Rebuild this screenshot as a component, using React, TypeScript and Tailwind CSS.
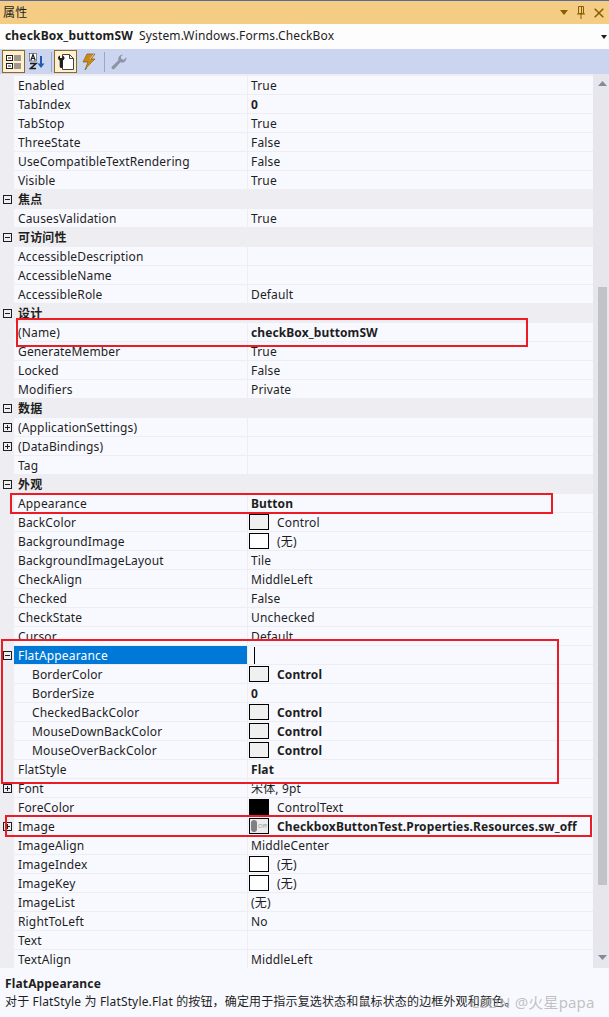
import React from 'react';

type Row = {
  name: string;
  value?: string;
  bold?: boolean;
  cat?: boolean;
  box?: 'plus' | 'minus';
  indent?: boolean;
  swatch?: 'control' | 'white' | 'black' | 'image';
  selected?: boolean;
};

const rows: Row[] = [
  { name: 'Enabled', value: 'True' },
  { name: 'TabIndex', value: '0', bold: true },
  { name: 'TabStop', value: 'True' },
  { name: 'ThreeState', value: 'False' },
  { name: 'UseCompatibleTextRendering', value: 'False' },
  { name: 'Visible', value: 'True' },
  { name: '焦点', cat: true, box: 'minus' },
  { name: 'CausesValidation', value: 'True' },
  { name: '可访问性', cat: true, box: 'minus' },
  { name: 'AccessibleDescription' },
  { name: 'AccessibleName' },
  { name: 'AccessibleRole', value: 'Default' },
  { name: '设计', cat: true, box: 'minus' },
  { name: '(Name)', value: 'checkBox_buttomSW', bold: true },
  { name: 'GenerateMember', value: 'True' },
  { name: 'Locked', value: 'False' },
  { name: 'Modifiers', value: 'Private' },
  { name: '数据', cat: true, box: 'minus' },
  { name: '(ApplicationSettings)', box: 'plus' },
  { name: '(DataBindings)', box: 'plus' },
  { name: 'Tag' },
  { name: '外观', cat: true, box: 'minus' },
  { name: 'Appearance', value: 'Button', bold: true },
  { name: 'BackColor', value: 'Control', swatch: 'control' },
  { name: 'BackgroundImage', value: '(无)', swatch: 'white' },
  { name: 'BackgroundImageLayout', value: 'Tile' },
  { name: 'CheckAlign', value: 'MiddleLeft' },
  { name: 'Checked', value: 'False' },
  { name: 'CheckState', value: 'Unchecked' },
  { name: 'Cursor', value: 'Default' },
  { name: 'FlatAppearance', box: 'minus', selected: true },
  { name: 'BorderColor', value: 'Control', bold: true, swatch: 'control', indent: true },
  { name: 'BorderSize', value: '0', bold: true, indent: true },
  { name: 'CheckedBackColor', value: 'Control', bold: true, swatch: 'control', indent: true },
  { name: 'MouseDownBackColor', value: 'Control', bold: true, swatch: 'control', indent: true },
  { name: 'MouseOverBackColor', value: 'Control', bold: true, swatch: 'control', indent: true },
  { name: 'FlatStyle', value: 'Flat', bold: true },
  { name: 'Font', value: '宋体, 9pt', box: 'plus' },
  { name: 'ForeColor', value: 'ControlText', swatch: 'black' },
  { name: 'Image', value: 'CheckboxButtonTest.Properties.Resources.sw_off', bold: true, swatch: 'image', box: 'plus' },
  { name: 'ImageAlign', value: 'MiddleCenter' },
  { name: 'ImageIndex', value: '(无)', swatch: 'white' },
  { name: 'ImageKey', value: '(无)', swatch: 'white' },
  { name: 'ImageList', value: '(无)' },
  { name: 'RightToLeft', value: 'No' },
  { name: 'Text' },
  { name: 'TextAlign', value: 'MiddleLeft' },
];

function ExpandBox({ type }: { type: 'plus' | 'minus' }) {
  return (
    <svg width="9" height="9" viewBox="0 0 9 9" className="absolute left-[3px] top-[5px]">
      <rect x="0.5" y="0.5" width="8" height="8" fill="none" stroke="#1e1e1e" />
      <path d="M2 4.5h5" stroke="#1e1e1e" />
      {type === 'plus' && <path d="M4.5 2v5" stroke="#1e1e1e" />}
    </svg>
  );
}

function Swatch({ kind }: { kind: NonNullable<Row['swatch']> }) {
  if (kind === 'image') {
    return (
      <div className="w-5 h-4 border border-black bg-[#ececec] flex items-center shrink-0 overflow-hidden">
        <div className="ml-[1px] w-[6px] h-3 rounded-full bg-[#808080]" />
        <span className="ml-[1px] text-[6px] leading-none tracking-normal font-normal text-[#999999]">Off</span>
      </div>
    );
  }
  const bg = kind === 'control' ? 'bg-[#f0f0f0]' : kind === 'black' ? 'bg-black' : 'bg-white';
  return <div className={`w-5 h-4 border border-black shrink-0 ${bg}`} />;
}

function PropRow({ row }: { row: Row }) {
  if (row.cat) {
    return (
      <div className="relative h-[19px] shrink-0 bg-[#eeeef2] pl-[18px] leading-[20px] font-bold text-[#1e1e1e]">
        {row.box && <ExpandBox type={row.box} />}
        {row.name}
      </div>
    );
  }
  return (
    <div className="relative h-[19px] shrink-0 flex bg-[#eeeef2]">
      {row.box && <ExpandBox type={row.box} />}
      <div
        className={`ml-[14px] w-[233px] h-[18px] leading-[20px] shrink-0 ${row.indent ? 'pl-[18px]' : 'pl-1'} ${
          row.selected ? 'bg-[#0078d7] text-white' : 'bg-[#f8f9ff] text-[#1e1e1e]'
        }`}
      >
        {row.name}
      </div>
      <div className={`ml-[1px] flex-1 h-[18px] flex items-center whitespace-nowrap text-[#1e1e1e] bg-[#f8f9ff] ${row.swatch ? 'pl-[1px]' : 'pl-[3px]'} ${row.bold ? 'font-bold tracking-[0.1px]' : ''}`}>
        {row.swatch && <Swatch kind={row.swatch} />}
        {row.swatch && <span className="w-[8px] shrink-0" />}
        {row.value && <span className="leading-[18px] pt-[2px]">{row.value}</span>}
        {row.selected && <span className="ml-[3px] w-[1px] h-[17px] bg-black" />}
      </div>
    </div>
  );
}

function CategorizedIcon() {
  return (
    <svg width="16" height="16" viewBox="0 0 16 16">
      <rect x="0.5" y="1.5" width="6" height="5" fill="#fff" stroke="#1e1e1e" />
      <path d="M2 4h3" stroke="#1e1e1e" />
      <rect x="0.5" y="9.5" width="6" height="5" fill="#fff" stroke="#1e1e1e" />
      <path d="M2 12h3" stroke="#1e1e1e" />
      <path d="M8 2h7M8 4h7M8 6h7M8 10h7M8 12h7M8 14h7" stroke="#424242" />
    </svg>
  );
}

function SortIcon() {
  return (
    <svg width="16" height="17" viewBox="0 0 16 17">
      <rect x="0.5" y="0.5" width="7" height="7.5" fill="#fff" stroke="#424242" strokeWidth="0.6" />
      <path d="M1.8 7.5 4 1.5l2.2 6M2.6 5.5h2.8" fill="none" stroke="#1e1e1e" strokeWidth="1.2" />
      <path d="M1 10.5h6L1.5 15.5H7" fill="none" stroke="#1e1e1e" strokeWidth="1.6" />
      <path d="M12 3v11" stroke="#1c5fb0" strokeWidth="2" />
      <path d="M8.5 10.5 12 15l3.5-4.5z" fill="#1c5fb0" />
    </svg>
  );
}

function PagesIcon() {
  return (
    <svg width="18" height="18" viewBox="0 0 18 18">
      <path d="M5.500 1.500h7l4 4v11h-11z" fill="#fff" stroke="#424242" />
      <path d="M12.500 1.500v4h4" fill="none" stroke="#424242" />
      <path d="M1 5c0-1.200.8-2.200 2-2.600V5h2.500V2.400C6.700 2.800 7.500 3.800 7.500 5c0 1.200-.7 2.100-1.700 2.500V13.500a1.550 1.550 0 0 1-3.100 0V7.500C1.700 7.100 1 6.200 1 5z" fill="#1e1e1e" />
    </svg>
  );
}

function BoltIcon() {
  return (
    <svg width="16" height="18" viewBox="0 0 16 18">
      <path d="M6 1h8l-4 5h4L4 17l3-8H2z" fill="#c98a1a" stroke="#7a5a1a" strokeWidth="0.7" />
      <path d="M13 1 9 6M14 7 6 15" stroke="#fff" strokeWidth="0.8" opacity="0.7" />
    </svg>
  );
}

function WrenchIcon() {
  return (
    <svg width="16" height="16" viewBox="0 0 16 16">
      <path d="M15.500 4a4.500 4.500 0 0 1-6 4.300L3.500 14.800a1.700 1.700 0 0 1-2.500-2.400l6.400-6.200A4.500 4.500 0 0 1 12 .5L9.800 2.800l.6 2.300 2.400.7 2.300-2.300c.2 0 .4 0 .4.500z" fill="#8f95a6" />
    </svg>
  );
}

export default function App() {
  return (
    <div className="relative w-[609px] h-[1017px] flex flex-col overflow-hidden text-[12px] tracking-[0.15px] bg-[#eeeef2] font-['Noto_Sans','Noto_Sans_CJK_SC',sans-serif]">
      {/* Title */}
      <div className="h-[24px] shrink-0 flex items-center border-t border-[#5a6a9a] bg-[#f5cc84] pl-[3px] pr-[5px] text-[#1e1e1e]">
        <span>属性</span>
        <div className="ml-auto flex items-center gap-[9px]">
          <svg width="8" height="5" viewBox="0 0 8 5"><path d="M0 0h8L4 5z" fill="#8a5c00" /></svg>
          <svg width="8" height="13" viewBox="0 0 8 13"><path d="M1.500.5h5v7h-5zM4.500 1v6M0 8h8M4 8v5" fill="none" stroke="#8a5c00" /></svg>
          <svg width="10" height="10" viewBox="0 0 10 10"><path d="M.7.7l8.600 8.600M9.300.7.7 9.300" stroke="#8a5c00" strokeWidth="1.500" /></svg>
        </div>
      </div>

      {/* Object selector */}
      <div className="h-[25px] shrink-0 flex items-center bg-[#fdfdfd] pl-[5px] pr-[1px] pb-[2px] text-[#1e1e1e] whitespace-nowrap">
        <span className="font-bold tracking-[0.17px]">checkBox_buttomSW</span>
        <span className="ml-[6px]">System.Windows.Forms.CheckBox</span>
        <svg className="ml-auto mr-[1px] mt-[2px]" width="6" height="4" viewBox="0 0 6 4"><path d="M0 0h6L3 4z" fill="#1e1e1e" /></svg>
      </div>

      {/* Toolbar */}
      <div className="h-[25px] shrink-0 flex items-center bg-[#ccd5f0] pl-[2px]">
        <div className="w-[23px] h-[23px] border border-[#8a6a2a] bg-[#fff0d0] flex items-center justify-center">
          <CategorizedIcon />
        </div>
        <div className="ml-[4px] w-[16px] flex items-center justify-center"><SortIcon /></div>
        <div className="ml-[6px] w-[1px] h-[20px] bg-[#9aa6c4]" />
        <div className="ml-[2px] w-[23px] h-[23px] border border-[#8a6a2a] bg-[#fff0d0] flex items-center justify-center">
          <PagesIcon />
        </div>
        <div className="ml-[4px] w-[16px] flex items-center justify-center"><BoltIcon /></div>
        <div className="ml-[7px] w-[1px] h-[20px] bg-[#9aa6c4]" />
        <div className="ml-[6px] w-[16px] flex items-center justify-center"><WrenchIcon /></div>
      </div>

      {/* Grid + scrollbar */}
      <div className="h-[894px] shrink-0 flex">
        <div className="w-[593px] shrink-0 pt-[2px] flex flex-col overflow-hidden">
          {rows.map((r) => (
            <PropRow key={r.name} row={r} />
          ))}
        </div>
        <div className="flex-1 bg-[#e6e6ec] flex flex-col items-center pl-[2px]">
          <svg className="mt-[7px] shrink-0" width="9" height="5" viewBox="0 0 9 5"><path d="M4.500 0 9 5H0z" fill="#868999" /></svg>
          <div className="mt-[201px] w-[9px] h-[598px] shrink-0 bg-[#c2c3c9]" />
          <svg className="mt-auto mb-[8px] shrink-0" width="9" height="5" viewBox="0 0 9 5"><path d="M0 0h9L4.500 5z" fill="#868999" /></svg>
        </div>
      </div>

      {/* Description */}
      <div className="flex-1 bg-[#f8f9ff] pl-[5px] pt-[7px] text-[#1e1e1e] whitespace-nowrap">
        <div className="font-bold leading-[18px]">FlatAppearance</div>
        <div className="leading-[18px]">对于 FlatStyle 为 FlatStyle.Flat 的按钮，确定用于指示复选状态和鼠标状态的边框外观和颜色。</div>
      </div>

      {/* Watermark */}
      <span className="absolute left-[470px] top-[992px] text-[15px] leading-[20px] text-[#a8a8a8]/70 whitespace-nowrap">CSDN @火星papa</span>

      {/* Red annotation boxes */}
      <div className="absolute left-[16px] top-[318px] w-[512px] h-[29px] border-2 border-[#ed1c24]" />
      <div className="absolute left-[10px] top-[493px] w-[543px] h-[21px] border-2 border-[#ed1c24]" />
      <div className="absolute left-[1px] top-[639px] w-[558px] h-[145px] border-2 border-[#ed1c24]" />
      <div className="absolute left-[5px] top-[815px] w-[587px] h-[22px] border-2 border-[#ed1c24]" />
    </div>
  );
}
